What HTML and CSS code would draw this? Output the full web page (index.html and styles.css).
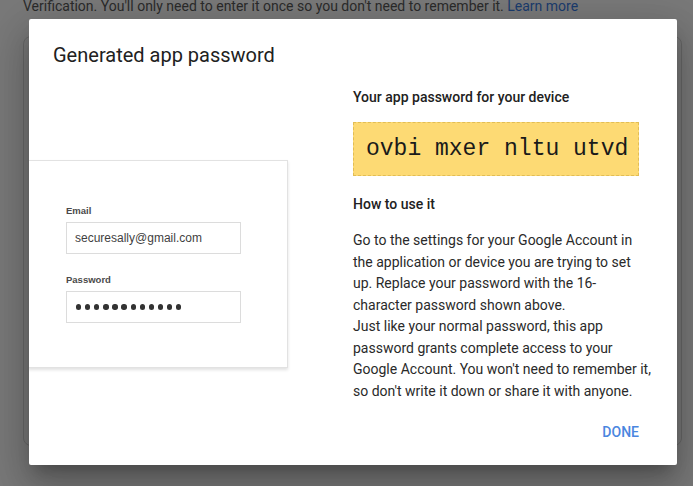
FILE: index.html
```html
<!DOCTYPE html>
<html lang="en">
<head>
<meta charset="utf-8">
<title>Generated app password</title>
<link rel="stylesheet" href="styles.css">
</head>
<body>
<div class="page">
  <p class="intro">Verification. You'll only need to enter it once so you don't need to remember it. <a class="link" href="#">Learn more</a></p>
  <div class="bg-card"></div>
</div>
<div class="dialog" role="dialog" aria-labelledby="dlg-title">
  <h2 class="dialog-title" id="dlg-title">Generated app password</h2>
  <div class="dialog-body">
    <div class="illus-col">
      <div class="login-card">
        <div class="field-label">Email</div>
        <div class="field-input">securesally@gmail.com</div>
        <div class="field-label pw-label">Password</div>
        <div class="field-input dots">
          <span class="dot"></span><span class="dot"></span><span class="dot"></span><span class="dot"></span><span class="dot"></span><span class="dot"></span><span class="dot"></span><span class="dot"></span><span class="dot"></span><span class="dot"></span><span class="dot"></span><span class="dot"></span>
        </div>
      </div>
    </div>
    <div class="info-col">
      <h3 class="info-heading">Your app password for your device</h3>
      <div class="app-pw">ovbi mxer nltu utvd</div>
      <h3 class="info-heading how">How to use it</h3>
      <p class="info-text">Go to the settings for your Google Account in the application or device you are trying to set up. Replace your password with the 16-character password shown above.</p>
      <p class="info-text">Just like your normal password, this app password grants complete access to your Google Account. You won't need to remember it, so don't write it down or share it with anyone.</p>
    </div>
  </div>
  <div class="dialog-actions">
    <button class="btn-done" type="button">DONE</button>
  </div>
</div>
</body>
</html>
```

FILE: styles.css
```css
* { box-sizing: border-box; }
html, body { margin: 0; padding: 0; }
body {
  width: 693px;
  height: 486px;
  overflow: hidden;
  background: #797979;
  font-family: Roboto, "Liberation Sans", Arial, sans-serif;
  position: relative;
}
.page {
  padding: 0 12px 0 23px;
}
.intro {
  margin: -4px 0 0;
  font-size: 14px;
  line-height: 20px;
  color: #2b2b2b;
  white-space: nowrap;
}
.link {
  color: #1b3c6e;
  text-decoration: none;
}
.bg-card {
  margin-top: 20px;
  height: 410px;
  border: 1px solid #686868;
  border-radius: 8px;
  width: 659px;
}
.dialog {
  position: absolute;
  left: 29px;
  top: 19px;
  width: 648px;
  height: 446px;
  background: #fff;
  border-radius: 2px;
  overflow: hidden;
  box-shadow: 0 11px 15px -7px rgba(0,0,0,.25), 0 24px 38px 3px rgba(0,0,0,.16), 0 9px 46px 8px rgba(0,0,0,.12);
  display: flex;
  flex-direction: column;
}
.dialog-title {
  margin: 22px 0 0 24px;
  font-size: 20px;
  line-height: 28px;
  font-weight: 400;
  color: #212121;
}
.dialog-body {
  display: flex;
  flex: 1;
}
.illus-col {
  width: 324px;
  padding-top: 91px;
}
.login-card {
  width: 260px;
  margin-left: -1px;
  height: 208px;
  border: 1px solid #e2e2e2;
  box-shadow: 0 2px 3px rgba(0,0,0,.12);
  padding: 44px 0 0 37px;
  font-family: "Liberation Sans", Arial, sans-serif;
}
.field-label {
  font-size: 9.5px;
  line-height: 12px;
  font-weight: 700;
  color: #4a4a4a;
}
.pw-label { margin-top: 20px; }
.field-input {
  margin-top: 5px;
  width: 175px;
  height: 32px;
  border: 1px solid #dcdcdc;
  padding: 0 8px;
  display: flex;
  align-items: center;
  font-size: 12px;
  color: #3f3f3f;
}
.dots { gap: 3.8px; padding-left: 9px; }
.dot {
  width: 5.3px;
  height: 5.3px;
  border-radius: 50%;
  background: #333;
}
.info-col {
  width: 300px;
  padding-top: 18px;
}
.info-heading {
  margin: 0;
  font-size: 14px;
  line-height: 20px;
  font-weight: 500;
  color: #212121;
}
.info-heading.how { margin-top: 18px; }
.app-pw {
  margin-top: 15px;
  width: 286px;
  height: 54px;
  background: #fdda74;
  border: 1px dashed #e2bd55;
  font-family: "Liberation Mono", "Courier New", monospace;
  font-size: 23px;
  line-height: 52px;
  padding-left: 12px;
  color: #1a1a1a;
  white-space: nowrap;
}
.info-text {
  margin: 0;
  font-size: 14px;
  line-height: 21.5px;
  color: #2a2a2a;
}
.info-heading.how + .info-text { margin-top: 16px; }
.dialog-actions {
  display: flex;
  justify-content: flex-end;
  padding: 0 38px 23px 0;
}
.btn-done {
  border: 0;
  background: none;
  padding: 0;
  font-family: Roboto, "Liberation Sans", Arial, sans-serif;
  font-size: 14px;
  font-weight: 500;
  line-height: 20px;
  color: #4a86e0;
  cursor: pointer;
}
```
